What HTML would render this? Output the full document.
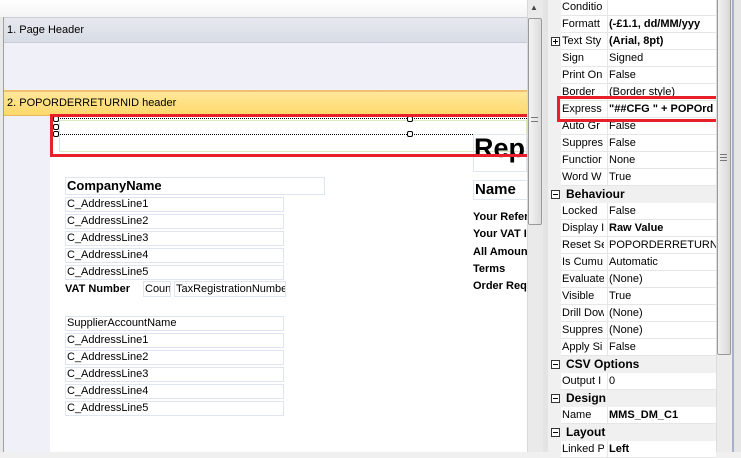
<!DOCTYPE html>
<html><head><style>
*{margin:0;padding:0;box-sizing:border-box}
body{width:741px;height:452px;overflow:hidden;background:#f0f0f0;font-family:"Liberation Sans",Arial,sans-serif;font-size:11px;color:#000;position:relative}
.a{position:absolute}
.box{position:absolute;border:1px solid #dfe5f0;background:#fff;padding-left:1px;font-size:11px;line-height:15px;white-space:nowrap;overflow:hidden;color:#000}
.b{font-weight:bold}
.row{position:absolute;left:561px;width:155px;height:17px;border-bottom:1px solid #e6e6e6;background:#fff}
.row span{position:absolute;top:2px;white-space:nowrap;font-size:11px;overflow:hidden}
.n{left:1px;width:42px}
.v{left:46px;width:109px;border-left:1px solid #e6e6e6;top:0!important;padding-top:2px;height:16px;padding-left:1px}
.cat{position:absolute;left:548px;width:168px;height:17px;background:#f0f0f0;font-weight:bold;font-size:12px}
.cat span{position:absolute;left:18px;top:1px}
.pm{position:absolute;left:3px;top:4px;width:9px;height:9px;border:1px solid #333;background:#fff}
.pm:before{content:"";position:absolute;left:1px;top:3px;width:5px;height:1px;background:#000}
.pp:after{content:"";position:absolute;left:3px;top:1px;width:1px;height:5px;background:#000}
</style></head><body>
<!-- design area -->
<div class="a" style="left:0;top:0;width:527px;height:452px;background:#f0f0f8"></div>
<div class="a" style="left:0;top:0;width:527px;height:17px;background:linear-gradient(#fff,#f4f4f4)"></div>
<div class="a" style="left:3px;top:17px;width:524px;height:26px;background:linear-gradient(#e6e9ef,#d8dce4);border-bottom:1px solid #c8ccd4;border-top:1px solid #c8ccd4"><span class="a" style="left:4px;top:6px">1. Page Header</span></div>
<div class="a" style="left:0;top:17px;width:4px;height:435px;background:#e8e8e8;border-right:1px solid #a0a0a0"></div>
<div class="a" style="left:4px;top:90px;width:523px;height:26px;background:linear-gradient(#ffe89a,#fdd86a);border-top:2px solid #f0c070;border-bottom:1px solid #e8b860"><span class="a" style="left:3px;top:5px">2. POPORDERRETURNID header</span></div>
<div class="a" style="left:50px;top:116px;width:477px;height:336px;background:#fff"></div>
<div class="a" style="left:56px;top:118px;width:471px;border-top:1px dotted #000"></div>
<div class="a" style="left:56px;top:134px;width:471px;border-top:1px dotted #000"></div>
<div class="a" style="left:59px;top:120px;width:468px;height:32px;border:1px solid #d8ecc0"></div>
<div class="a" style="left:53px;top:116px;width:6px;height:6px;border:1px solid #000;border-radius:2px;background:#fff"></div>
<div class="a" style="left:53px;top:124px;width:6px;height:6px;border:1px solid #000;border-radius:2px;background:#fff"></div>
<div class="a" style="left:53px;top:131px;width:6px;height:6px;border:1px solid #000;border-radius:2px;background:#fff"></div>
<div class="a" style="left:407px;top:116px;width:6px;height:6px;border:1px solid #000;border-radius:2px;background:#fff"></div>
<div class="a" style="left:407px;top:131px;width:6px;height:6px;border:1px solid #000;border-radius:2px;background:#fff"></div>
<div class="a" style="left:473px;top:134px;width:54px;height:38px;border:1px solid #e0e6f0;font-weight:bold;font-size:27px;line-height:26px;padding-top:0;overflow:hidden">Rep</div>
<div class="a" style="left:50px;top:114px;width:481px;height:43px;border:3px solid #e8202a"></div>
<div class="box b" style="left:65px;top:177px;width:260px;height:18px;font-size:13px;line-height:16px">CompanyName</div>
<div class="box" style="left:65px;top:197px;width:219px;height:15px;line-height:13px">C_AddressLine1</div>
<div class="box" style="left:65px;top:214px;width:219px;height:15px;line-height:13px">C_AddressLine2</div>
<div class="box" style="left:65px;top:231px;width:219px;height:15px;line-height:13px">C_AddressLine3</div>
<div class="box" style="left:65px;top:248px;width:219px;height:15px;line-height:13px">C_AddressLine4</div>
<div class="box" style="left:65px;top:265px;width:219px;height:15px;line-height:13px">C_AddressLine5</div>
<div class="a b" style="left:65px;top:283px">VAT Number</div>
<div class="box" style="left:143px;top:281px;width:28px;height:16px;line-height:14px">Coun</div>
<div class="box" style="left:174px;top:281px;width:112px;height:16px;line-height:14px">TaxRegistrationNumber</div>
<div class="box" style="left:65px;top:316px;width:219px;height:15px;line-height:13px">SupplierAccountName</div>
<div class="box" style="left:65px;top:333px;width:219px;height:15px;line-height:13px">C_AddressLine1</div>
<div class="box" style="left:65px;top:350px;width:219px;height:15px;line-height:13px">C_AddressLine2</div>
<div class="box" style="left:65px;top:367px;width:219px;height:15px;line-height:13px">C_AddressLine3</div>
<div class="box" style="left:65px;top:384px;width:219px;height:15px;line-height:13px">C_AddressLine4</div>
<div class="box" style="left:65px;top:401px;width:219px;height:15px;line-height:13px">C_AddressLine5</div>
<div class="box b" style="left:473px;top:180px;width:54px;height:20px;font-size:15px;line-height:18px;border-right:none">Name</div>
<div class="a b" style="left:473px;top:210px;line-height:14px">Your Refer<br><span style="display:block;margin-top:3px">Your VAT I</span><span style="display:block;margin-top:4px">All Amoun</span><span style="display:block;margin-top:3px">Terms</span><span style="display:block;margin-top:3px">Order Req</span></div>
<!-- design scrollbar -->
<div class="a" style="left:527px;top:0;width:16px;height:452px;background:#eaeaea;border-left:1px solid #d8d8d8"></div>
<div class="a" style="left:530px;top:3px;font-size:8px;color:#444">▲</div>
<div class="a" style="left:528px;top:18px;width:14px;height:207px;background:linear-gradient(90deg,#f4f4f4,#dcdcdc);border:1px solid #999;border-radius:2px"></div>
<div class="a" style="left:531px;top:117px;width:7px;height:5px;border-top:1px solid #777;border-bottom:1px solid #777"></div>
<!-- property grid -->
<div class="a" style="left:543px;top:0;width:5px;height:452px;background:#e4e4e4"></div>
<div class="a" style="left:548px;top:0;width:13px;height:452px;background:#f0f0f0"></div>
<div class="row" style="top:-1px"><span class="n">Conditio</span><span class="v"></span></div>
<div class="row" style="top:16px"><span class="n">Formatt</span><span class="v b">(-£1.1, dd/MM/yyy</span></div>
<div class="row" style="top:33px"><span class="n">Text Sty</span><span class="v b">(Arial, 8pt)</span></div>
<div class="a pm pp" style="left:551px;top:37px"></div>
<div class="row" style="top:50px"><span class="n">Sign</span><span class="v">Signed</span></div>
<div class="row" style="top:67px"><span class="n">Print On</span><span class="v">False</span></div>
<div class="row" style="top:84px"><span class="n">Border</span><span class="v">(Border style)</span></div>
<div class="row" style="top:101px"><span class="n">Express</span><span class="v b">"##CFG " + POPOrd</span></div>
<div class="row" style="top:118px"><span class="n">Auto Gr</span><span class="v">False</span></div>
<div class="row" style="top:135px"><span class="n">Suppres</span><span class="v">False</span></div>
<div class="row" style="top:152px"><span class="n">Functior</span><span class="v">None</span></div>
<div class="row" style="top:169px"><span class="n">Word W</span><span class="v">True</span></div>
<div class="cat" style="top:186px"><div class="pm"></div><span>Behaviour</span></div>
<div class="row" style="top:203px"><span class="n">Locked</span><span class="v">False</span></div>
<div class="row" style="top:220px"><span class="n">Display I</span><span class="v b">Raw Value</span></div>
<div class="row" style="top:237px"><span class="n">Reset Se</span><span class="v">POPORDERRETURNID</span></div>
<div class="row" style="top:254px"><span class="n">Is Cumu</span><span class="v">Automatic</span></div>
<div class="row" style="top:271px"><span class="n">Evaluate</span><span class="v">(None)</span></div>
<div class="row" style="top:288px"><span class="n">Visible</span><span class="v">True</span></div>
<div class="row" style="top:305px"><span class="n">Drill Dow</span><span class="v">(None)</span></div>
<div class="row" style="top:322px"><span class="n">Suppres</span><span class="v">(None)</span></div>
<div class="row" style="top:339px"><span class="n">Apply Si</span><span class="v">False</span></div>
<div class="cat" style="top:356px"><div class="pm"></div><span>CSV Options</span></div>
<div class="row" style="top:373px"><span class="n">Output I</span><span class="v">0</span></div>
<div class="cat" style="top:390px"><div class="pm"></div><span>Design</span></div>
<div class="row" style="top:407px"><span class="n">Name</span><span class="v b">MMS_DM_C1</span></div>
<div class="cat" style="top:424px"><div class="pm"></div><span>Layout</span></div>
<div class="row" style="top:441px"><span class="n">Linked P</span><span class="v b">Left</span></div>
<div class="a" style="left:557px;top:96px;width:173px;height:26px;border:3px solid #e8202a"></div>
<!-- grid scrollbar -->
<div class="a" style="left:716px;top:0;width:16px;height:452px;background:#ececec;border-left:1px solid #ddd"></div>
<div class="a" style="left:717px;top:-2px;width:14px;height:357px;background:linear-gradient(90deg,#f2f2f2,#d8d8d8);border:1px solid #999;border-radius:2px"></div>
<div class="a" style="left:720px;top:154px;width:7px;height:7px;border-top:1px solid #777;border-bottom:1px solid #777"></div>
<div class="a" style="left:720px;top:157px;width:7px;height:1px;background:#777"></div>
<div class="a" style="left:732px;top:0;width:2px;height:452px;background:#a8b0c8"></div>
<div class="a" style="left:734px;top:0;width:7px;height:452px;background:#e6e6e6"></div>
</body></html>
